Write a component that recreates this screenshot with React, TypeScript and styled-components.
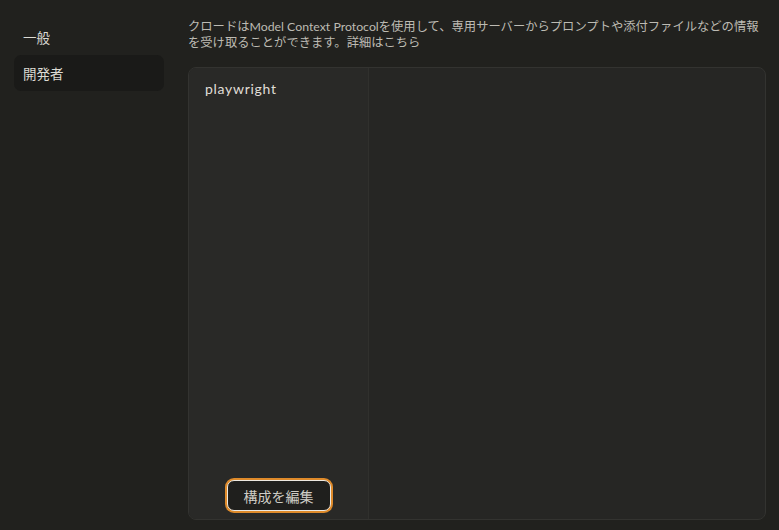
import React from "react";
import styled, { createGlobalStyle } from "styled-components";

const Global = createGlobalStyle`
  html, body { margin: 0; padding: 0; background: #21211e; }
  body { font-family: "Lato", "Noto Sans CJK JP", sans-serif; -webkit-font-smoothing: antialiased; }
  * { box-sizing: border-box; }
`;

const Page = styled.div`
  display: flex;
  width: 100vw;
  height: 100vh;
  background: #21211e;
  color: #c9c7c0;
`;

const Sidebar = styled.nav`
  width: 150px;
  margin-left: 14px;
  margin-right: 24px;
  padding-top: 19px;
  display: flex;
  flex-direction: column;
`;

const NavItem = styled.div<{ $active?: boolean }>`
  height: 36px;
  display: flex;
  align-items: center;
  padding-left: 9px;
  border-radius: 7px;
  font-family: "Noto Sans CJK JP", sans-serif;
  font-size: 13.5px;
  color: #dcdad3;
  background: ${(p) => (p.$active ? "#1a1a18" : "transparent")};
`;

const Main = styled.main`
  flex: 1;
  display: flex;
  flex-direction: column;
  padding: 19px 13px 10px 0;
  min-width: 0;
`;

const Desc = styled.p`
  margin: 0 0 16px 0;
  font-family: "Lato", "Noto Sans CJK JP", sans-serif;
  font-size: 12.3px;
  line-height: 16px;
  color: #bdbbb3;
`;

const Panel = styled.section`
  flex: 1;
  display: flex;
  border: 1px solid #333330;
  border-radius: 8px;
  background: #262624;
  overflow: hidden;
`;

const ServerList = styled.div`
  width: 180px;
  display: flex;
  flex-direction: column;
  background: #292927;
  border-right: 1px solid #30302d;
`;

const ServerItem = styled.div`
  padding: 12px 16px 12px;
  font-family: "Lato", sans-serif;
  font-size: 14px;
  letter-spacing: 0.7px;
  color: #e0ded7;
`;

const Spacer = styled.div`
  flex: 1;
`;

const EditButton = styled.button`
  align-self: center;
  margin-bottom: 8px;
  width: 104px;
  height: 31px;
  border-radius: 7px;
  border: 1px solid #ece8e0;
  box-shadow: 0 0 0 2px #de8a2a;
  background: #1f1f1d;
  color: #cfcdc6;
  font-family: "Noto Sans CJK JP", sans-serif;
  font-size: 14px;
  cursor: pointer;
`;

const Detail = styled.div`
  flex: 1;
`;

export default function App() {
  return (
    <>
      <Global />
      <Page>
        <Sidebar>
          <NavItem>一般</NavItem>
          <NavItem $active>開発者</NavItem>
        </Sidebar>
        <Main>
          <Desc>
            クロードはModel Context Protocolを使用して、専用サーバーからプロンプトや添付ファイルなどの情報
            <br />
            を受け取ることができます。詳細はこちら
          </Desc>
          <Panel>
            <ServerList>
              <ServerItem>playwright</ServerItem>
              <Spacer />
              <EditButton>構成を編集</EditButton>
            </ServerList>
            <Detail />
          </Panel>
        </Main>
      </Page>
    </>
  );
}
